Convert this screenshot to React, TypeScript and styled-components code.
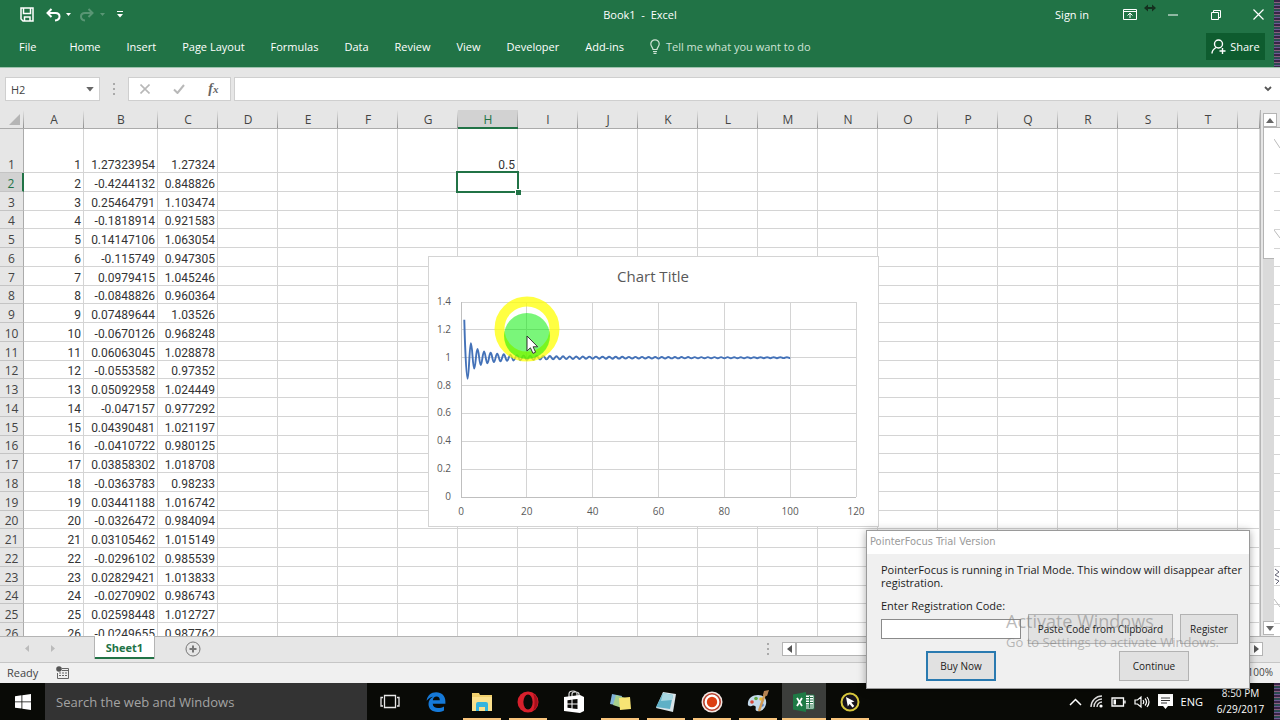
import React from "react";
import styled, { createGlobalStyle, css } from "styled-components";

const GREEN = "#217346";
const UI_FONT = '"Open Sans", "Noto Sans", sans-serif';
const CELL_FONT = 'Roboto, "Open Sans", sans-serif';

const GlobalStyle = createGlobalStyle`
  *, *::before, *::after { box-sizing: border-box; }
  body { margin: 0; font-family: ${UI_FONT}; font-size: 11px; color: #444; }
  button, input { font: inherit; color: inherit; margin: 0; padding: 0; }
  button { background: none; border: 0; cursor: default; }
  svg { display: block; flex: none; }
`;

const Desktop = styled.div`
  position: relative;
  display: flex;
  flex-direction: column;
  height: 100vh;
  overflow: hidden;
  background: #e6e6e6;
`;

/* ---------- title bar and ribbon ---------- */

const Header = styled.header`
  position: relative;
  background: ${GREEN};
  color: #fff;
  border-bottom: 1px solid #9fc3ae;
  height: 68px;
`;

const TitleBar = styled.div`
  display: grid;
  grid-template-columns: 1fr auto 1fr;
  align-items: center;
  height: 29px;
`;

const QuickAccess = styled.div`
  display: flex;
  align-items: center;
  padding-left: 20px;
`;

const QuickButton = styled.button<{ $gap?: number; $dim?: boolean }>`
  margin-right: ${(p) => p.$gap ?? 0}px;
  opacity: ${(p) => (p.$dim ? 0.25 : 1)};
`;

const Title = styled.h1`
  margin: 0;
  font-size: 11px;
  font-weight: 400;
  white-space: pre;
`;

const WindowControls = styled.div`
  display: flex;
  justify-content: flex-end;
  align-items: center;
`;

const SignIn = styled.button`
  margin-right: 19px;
`;

const WindowButton = styled.button`
  display: flex;
  justify-content: center;
  width: 43px;
`;

const ResizeCursor = styled.svg`
  position: absolute;
  right: 124px;
  top: 4px;
`;

const Ribbon = styled.nav`
  display: flex;
  align-items: center;
  height: 35px;
  gap: 26px;
  padding: 0 15px 0 19px;
`;

const RibbonTab = styled.button<{ $file?: boolean }>`
  margin-right: ${(p) => (p.$file ? 7 : 0)}px;
  white-space: nowrap;
`;

const TellMe = styled.button`
  display: flex;
  align-items: center;
  gap: 6px;
  color: #cfe3d6;
  white-space: nowrap;
`;

const Share = styled.button`
  display: flex;
  align-items: center;
  justify-content: center;
  gap: 4px;
  width: 59px;
  height: 27px;
  margin-left: auto;
  background: #0e5c2f;
`;

const noise = css`
  background-color: #3b2f45;
  background-image: repeating-linear-gradient(
    to bottom,
    #3a2448 0,
    #3a2448 2px,
    #8a5f7c 2px,
    #8a5f7c 3px,
    #2c4a52 3px,
    #2c4a52 5px,
    #6d5a94 5px,
    #6d5a94 6px
  );
`;

const NoiseStrip = styled.div`
  position: absolute;
  top: 0;
  right: 0;
  bottom: 0;
  width: 6px;
  ${noise}
`;

/* ---------- formula bar ---------- */

const FormulaBar = styled.div`
  display: flex;
  align-items: center;
  height: 42px;
  padding-left: 5px;
`;

const NameBox = styled.label`
  display: flex;
  align-items: center;
  width: 95px;
  height: 24px;
  padding: 0 5px;
  background: #fff;
  border: 1px solid #cfcfcf;
`;

const NameInput = styled.input`
  flex: 1;
  min-width: 0;
  border: 0;
  outline: 0;
  background: none;
`;

const Grip = styled.div`
  width: 2px;
  height: 12px;
  margin: 0 13px;
  background: repeating-linear-gradient(to bottom, #aaa 0, #aaa 2px, transparent 2px, transparent 5px);
`;

const FormulaButtons = styled.div`
  display: flex;
  align-items: center;
  justify-content: space-around;
  width: 103px;
  height: 24px;
  margin-right: 3px;
  background: #fff;
  border: 1px solid #cfcfcf;
`;

const Fx = styled.span`
  font-family: "Liberation Serif", serif;
  font-style: italic;
  font-weight: 700;
  font-size: 14px;
  line-height: 16px;
  color: #666;
  small { font-size: 11px; }
`;

const FormulaField = styled.label`
  display: flex;
  flex: 1;
  align-items: center;
  height: 24px;
  padding: 0 8px;
  background: #fff;
  border: 1px solid #cfcfcf;
  border-right: 0;
`;

/* ---------- sheet ---------- */

const SheetArea = styled.main`
  position: relative;
  display: flex;
  flex: 1;
  min-height: 0;
  overflow: hidden;
`;

const GridPane = styled.div`
  position: relative;
  flex: 1;
  min-width: 0;
  overflow: hidden;
  border-right: 1px solid #b4b4b4;
`;

const Grid = styled.table`
  width: 100%;
  table-layout: fixed;
  border-collapse: separate;
  border-spacing: 0;
  background: #fff;
`;

const Col = styled.col<{ $w?: number }>`
  width: ${(p) => (p.$w ? p.$w + "px" : "auto")};
`;

const ColHead = styled.th<{ $active?: boolean }>`
  height: 19px;
  padding: ${(p) => (p.$active ? 2 : 1)}px 0 0;
  font-size: 12px;
  line-height: 15px;
  font-weight: 400;
  color: ${(p) => (p.$active ? GREEN : "#444")};
  background: linear-gradient(to bottom, transparent, #8f8f8f) right / 1px 100% no-repeat
    ${(p) => (p.$active ? "#d2d2d2" : "#e6e6e6")};
  border-bottom: ${(p) => (p.$active ? `2px solid ${GREEN}` : "1px solid #ababab")};
`;

const Row = styled.tr<{ $tall?: boolean }>`
  height: ${(p) => (p.$tall ? 44 : 19)}px;
  &:nth-child(4n) { height: 18px; }
`;

const RowHead = styled.th<{ $active?: boolean }>`
  padding: 0;
  vertical-align: bottom;
  font-size: 12px;
  line-height: 15px;
  font-weight: 400;
  color: ${(p) => (p.$active ? GREEN : "#444")};
  background: ${(p) => (p.$active ? "#d2d2d2" : "#e6e6e6")};
  border-right: ${(p) => (p.$active ? `2px solid ${GREEN}` : "1px solid #ababab")};
  border-bottom: 1px solid #c4c4c4;
`;

const Cell = styled.td<{ $selected?: boolean }>`
  padding: 0 2px 0 0;
  vertical-align: bottom;
  text-align: right;
  font-family: ${CELL_FONT};
  font-size: 12px;
  line-height: 13px;
  color: #333;
  white-space: nowrap;
  border-right: 1px solid #d4d4d4;
  border-bottom: 1px solid #d4d4d4;
  ${(p) =>
    p.$selected &&
    css`
      position: relative;
      &::before {
        content: "";
        position: absolute;
        inset: -2px;
        border: 2px solid ${GREEN};
      }
      &::after {
        content: "";
        position: absolute;
        right: -4px;
        bottom: -4px;
        width: 6px;
        height: 6px;
        background: ${GREEN};
        border: 1px solid #fff;
        border-width: 1px 0 0 1px;
      }
    `}
`;

const ChartFrame = styled.figure`
  position: absolute;
  left: 428px;
  top: 146px;
  margin: 0;
  background: #fff;
  border: 1px solid #d4d4d4;
`;

const Pointer = styled.svg`
  position: absolute;
  left: 65px;
  top: 38px;
`;

const ScrollColumn = styled.div`
  display: flex;
  flex-direction: column;
  width: 19px;
  padding: 3px 0 1px 2px;
  background: #e6e6e6;
`;

const ScrollButton = styled.button`
  display: flex;
  align-items: center;
  justify-content: center;
  width: 14px;
  height: 14px;
  background: #fff;
  border: 1px solid #b4b4b4;
`;

const ScrollTrack = styled.div`
  flex: 1;
  background: #dadada;
`;

const ScrollThumb = styled.div`
  height: 132px;
  background: #fff;
  border: 1px solid #b4b4b4;
  border-right: 0;
`;

const SheetStrip = styled.svg`
  position: absolute;
  right: 0;
  top: 19px;
`;

/* ---------- sheet tabs and status ---------- */

const TabBar = styled.div`
  display: flex;
  align-items: flex-start;
  height: 26px;
  border-top: 1px solid #b4b4b4;
  background: #e6e6e6;
`;

const TabNav = styled.div`
  display: flex;
  gap: 22px;
  width: 94px;
  padding: 8px 0 0 25px;
`;

const SheetTab = styled.button`
  width: 61px;
  height: 23px;
  margin-top: -1px;
  background: #fff;
  border: 1px solid #b4b4b4;
  border-width: 0 1px;
  box-shadow: inset 0 -2px 0 ${GREEN};
  font-weight: 700;
  color: ${GREEN};
`;

const AddSheet = styled.button`
  margin: 4px 0 0 30px;
`;

const HScroll = styled.div`
  display: flex;
  align-items: center;
  width: 526px;
  margin: 5px 0 0 auto;
  padding-right: 17px;
`;

const HTrack = styled.div`
  flex: 1;
  height: 14px;
  background: #fff;
  border: 1px solid #b4b4b4;
`;

const StatusBar = styled.footer`
  display: flex;
  align-items: center;
  height: 21px;
  gap: 18px;
  padding: 0 7px 2px;
  background: #f0f0f0;
  border-top: 1px solid #c6c6c6;
`;

const Zoom = styled.span`
  margin-left: auto;
  font-size: 10px;
`;

/* ---------- dialog ---------- */

const Dialog = styled.section`
  position: absolute;
  right: 30px;
  bottom: 31px;
  width: 384px;
  background: #f0f0f0;
  border: 1px solid #9a9a9a;
  box-shadow: 0 1px 8px rgba(0, 0, 0, 0.35);
  color: #1c1c1c;
`;

const DialogTitle = styled.h2`
  margin: 0;
  padding: 0 3px;
  height: 23px;
  font-family: "DejaVu Sans Condensed", "DejaVu Sans", sans-serif;
  font-size: 11px;
  font-weight: 400;
  line-height: 22px;
  background: #fff;
  color: #9b9b9b;
`;

const DialogBody = styled.form`
  padding: 9px 11px 7px 14px;
`;

const Message = styled.p`
  margin: 0 -8px 10px 0;
  line-height: 13px;
`;

const CodeLabel = styled.label`
  display: block;
  line-height: 13px;
`;

const CodeRow = styled.div`
  display: flex;
  align-items: center;
  gap: 7px;
  height: 32px;
  margin: 1px 0 6px;
`;

const CodeInput = styled.input`
  flex: 1;
  min-width: 0;
  height: 20px;
  padding: 0 4px;
  background: #fff;
  border: 1px solid #8a8a8a;
`;

const DialogButton = styled.button<{ $w: number; $primary?: boolean }>`
  width: ${(p) => p.$w}px;
  height: 30px;
  font-size: 10px;
  background: #e1e1e1;
  border: ${(p) => (p.$primary ? "2px solid #2a7ab0" : "1px solid #b2b2b2")};
`;

const DialogActions = styled.div`
  display: flex;
  justify-content: space-between;
  padding: 0 49px 0 45px;
`;

const Watermark = styled.div`
  position: absolute;
  right: 52px;
  bottom: 69px;
  width: 222px;
  color: rgba(120, 120, 120, 0.5);
  pointer-events: none;
  white-space: nowrap;
  font-size: 13px;
  line-height: 18px;
  strong {
    display: block;
    font-weight: 400;
    font-size: 18px;
    line-height: 24px;
  }
`;

/* ---------- taskbar ---------- */

const Taskbar = styled.div`
  position: relative;
  display: flex;
  height: 37px;
  background: #090a06;
  color: #fff;
`;

const StartButton = styled.button`
  display: flex;
  align-items: center;
  justify-content: center;
  width: 45px;
`;

const Search = styled.input`
  width: 322px;
  padding: 0 11px;
  border: 0;
  outline: 0;
  background: #333;
  font-size: 13px;
  &::placeholder { color: #a3a3a3; opacity: 1; }
`;

const TaskButton = styled.button<{ $open?: boolean; $active?: boolean }>`
  display: flex;
  align-items: center;
  justify-content: center;
  width: ${(p) => (p.$active ? 44 : 38)}px;
  margin: 0 ${(p) => (p.$active ? 1 : 4)}px;
  background: ${(p) => (p.$active ? "#3c3e3b" : "none")};
  border-top: 2px solid transparent;
  border-bottom: 2px solid ${(p) => (p.$open ? "#f9c57c" : "transparent")};
`;

const Tray = styled.div`
  display: flex;
  align-items: center;
  gap: 8px;
  margin-left: auto;
  padding-right: 10px;
`;

const Clock = styled.time`
  width: 59px;
  padding-bottom: 2px;
  text-align: center;
  font-size: 10px;
  line-height: 16px;
`;

const Caret = ({ color = "#fff", size = 6 }: { color?: string; size?: number }) => (
  <svg width={size} height={size / 2 + 1} viewBox="0 0 6 4">
    <path d="M0 0h6L3 3.5z" fill={color} />
  </svg>
);

const term = (k: number) => ((4 / Math.PI) * (k % 2 ? 1 : -1)) / (2 * k - 1);
const trim = (v: number, digits: number) => String(parseFloat(v.toFixed(digits)));

const sums: number[] = [];
for (let k = 1; k <= 100; k++) sums.push((sums[k - 2] ?? 0) + term(k));

const columns = "ABCDEFGHIJKLMNOPQRST".split("");

function cellText(col: string, row: number): string {
  if (col === "A") return String(row);
  if (col === "B") return trim(term(row), row % 2 ? 8 : 7);
  if (col === "C") return trim(sums[row - 1], 6);
  if (col === "H" && row === 1) return "0.5";
  return "";
}

const PLOT = { x: 32, y: 45, w: 395, h: 195 };
const px = (v: number) => PLOT.x + (v / 120) * PLOT.w;
const py = (v: number) => PLOT.y + PLOT.h - (v / 1.4) * PLOT.h;

function linePath() {
  let d = `M${px(1)} ${py(sums[0])}`;
  for (let i = 1; i < sums.length; i++) {
    const a = px(i);
    const b = px(i + 1);
    const m = (b - a) * 0.42;
    const y0 = py(sums[i - 1]);
    const y1 = py(sums[i]);
    d += `C${i === 1 ? a + 0.5 : a + m} ${i === 1 ? y0 + 20 : y0} ${b - m} ${y1} ${b} ${y1}`;
  }
  return d;
}

function Chart() {
  return (
    <ChartFrame>
      <svg width="449" height="269" fontFamily={UI_FONT} fill="#595959" role="img" aria-label="Chart Title">
        <text x="224" y="25" fontSize="15" textAnchor="middle">Chart Title</text>
        <g stroke="#d4d4d4" shapeRendering="crispEdges">
          {[0.2, 0.4, 0.6, 0.8, 1, 1.2, 1.4].map((v) => (
            <line key={v} x1={PLOT.x} x2={PLOT.x + PLOT.w} y1={py(v)} y2={py(v)} />
          ))}
          {[20, 40, 60, 80, 100, 120].map((v) => (
            <line key={v} x1={px(v)} x2={px(v)} y1={PLOT.y} y2={PLOT.y + PLOT.h} />
          ))}
          <path d={`M${PLOT.x} ${PLOT.y}v${PLOT.h}h${PLOT.w}`} fill="none" stroke="#bfbfbf" />
        </g>
        <g fontSize="10">
          {[0, 0.2, 0.4, 0.6, 0.8, 1, 1.2, 1.4].map((v) => (
            <text key={v} x="22" y={py(v) + 3} textAnchor="end">{v}</text>
          ))}
          {[0, 20, 40, 60, 80, 100, 120].map((v) => (
            <text key={v} x={px(v)} y="258" textAnchor="middle">{v}</text>
          ))}
        </g>
        <path d={linePath()} fill="none" stroke="#4472b8" strokeWidth="1.9" strokeLinejoin="round" />
      </svg>
      <Pointer width="66" height="68">
        <circle cx="33" cy="34" r="27.5" fill="none" stroke="#ffff00" strokeOpacity="0.74" strokeWidth="10" />
        <circle cx="33" cy="41" r="23" fill="#00ee00" fillOpacity="0.52" />
        <path d="M33 41v15l3.400-3.200 2.600 5.600 2.600-1.200-2.500-5.400h4.600z" fill="#fff" stroke="#333" />
      </Pointer>
    </ChartFrame>
  );
}

function Worksheet() {
  return (
    <SheetArea>
      <GridPane>
        <Grid>
          <colgroup>
            <Col $w={24} />
            {columns.map((c) => (
              <Col key={c} $w={c === "B" ? 74 : 60} />
            ))}
            <Col />
          </colgroup>
          <thead>
            <tr>
              <ColHead>
                <svg width="23" height="15"><path d="M20 2v11H9z" fill="#b5b5b5" /></svg>
              </ColHead>
              {columns.map((c) => (
                <ColHead key={c} scope="col" $active={c === "H"}>{c}</ColHead>
              ))}
              <ColHead />
            </tr>
          </thead>
          <tbody>
            {Array.from({ length: 26 }, (_, i) => i + 1).map((row) => (
              <Row key={row} $tall={row === 1}>
                <RowHead scope="row" $active={row === 2}>{row}</RowHead>
                {columns.map((c) => (
                  <Cell key={c} $selected={c === "H" && row === 2}>{cellText(c, row)}</Cell>
                ))}
                <Cell />
              </Row>
            ))}
          </tbody>
        </Grid>
        <Chart />
      </GridPane>
      <ScrollColumn>
        <ScrollButton aria-label="Scroll up"><svg width="8" height="5"><path d="M0 5h8L4 0z" fill="#666" /></svg></ScrollButton>
        <ScrollTrack><ScrollThumb /></ScrollTrack>
        <ScrollButton aria-label="Scroll down"><svg width="8" height="5"><path d="M0 0h8L4 5z" fill="#666" /></svg></ScrollButton>
      </ScrollColumn>
      <SheetStrip width="6" height="600">
        <rect width="6" height="600" fill="#fff" />
        <g stroke="#d4d4d4" shapeRendering="crispEdges">
          {Array.from({ length: 30 }, (_, i) => (
            <line key={i} x1="0" x2="6" y1={44 + i * 18.75} y2={44 + i * 18.75} />
          ))}
        </g>
        <path d="M0 10l6 9M0 101l6 8M0 470l6 8" stroke="#bbb" fill="none" />
        <path d="M1 440l4 3-4 3 4 2M1 450l4 2-3 3" stroke="#667" fill="none" />
      </SheetStrip>
    </SheetArea>
  );
}

function TrialDialog() {
  return (
    <Dialog role="dialog" aria-labelledby="trial-title">
      <DialogTitle id="trial-title">PointerFocus Trial Version</DialogTitle>
      <DialogBody onSubmit={(e) => e.preventDefault()}>
        <Message>PointerFocus is running in Trial Mode. This window will disappear after registration.</Message>
        <CodeLabel htmlFor="code">Enter Registration Code:</CodeLabel>
        <CodeRow>
          <CodeInput id="code" />
          <DialogButton type="button" $w={145}>Paste Code from Clipboard</DialogButton>
          <DialogButton type="submit" $w={58}>Register</DialogButton>
        </CodeRow>
        <DialogActions>
          <DialogButton type="button" $w={70} $primary>Buy Now</DialogButton>
          <DialogButton type="button" $w={70}>Continue</DialogButton>
        </DialogActions>
      </DialogBody>
    </Dialog>
  );
}

const tabs = ["File", "Home", "Insert", "Page Layout", "Formulas", "Data", "Review", "View", "Developer", "Add-ins"];

const apps: { name: string; open?: boolean; active?: boolean; icon: React.ReactNode }[] = [
  {
    name: "Task View",
    icon: (
      <svg width="20" height="16" fill="none" stroke="#e8e8e8" strokeWidth="1.3">
        <path d="M4.5 1.5h11v12h-11zM3 3.5H1v8.500h2M17 3.5h2v8.500h-2" />
      </svg>
    ),
  },
  {
    name: "Edge",
    icon: (
      <svg width="20" height="20" viewBox="0 0 20 20">
        <path
          d="M.6 8.800C1.300 3.500 5 .3 10.200.3c5.600 0 9.200 3.800 9.200 9.300v2.200H6.700c.2 3 2.500 4.300 5.300 4.300 2.200 0 4.200-.6 6-1.700v4c-1.900 1.100-4.200 1.500-6.600 1.500-5.300 0-8.900-3-8.900-7.900 0-3.200 1.700-5.900 4.600-7.300C5 5 3.200 5.800.6 8.800zM6.800 8.300h7c0-2.300-1-3.700-3.300-3.700-2.100 0-3.400 1.500-3.700 3.700z"
          fill="#1579d8"
        />
      </svg>
    ),
  },
  {
    name: "File Explorer",
    open: true,
    icon: (
      <svg width="22" height="20" viewBox="0 0 22 20">
        <path d="M1 1h7l1 2h12v16H1z" fill="#f0cf6c" />
        <path d="M1 5h20v14H1z" fill="#fbe08c" />
        <path d="M5 19v-7q0-2 2-2h8q2 0 2 2v7h-3v-4H8v4z" fill="#35b4de" />
      </svg>
    ),
  },
  {
    name: "Opera",
    open: true,
    icon: (
      <svg width="22" height="22" viewBox="0 0 22 22">
        <ellipse cx="11" cy="11" rx="10.500" ry="10.500" fill="#d8202c" />
        <ellipse cx="11" cy="11" rx="4.600" ry="7.500" fill="#0b0a08" />
        <path d="M16 2.200a10.500 10.500 0 0 1 0 17.600c2-4 2-13 0-17.600z" fill="#a30f1b" />
      </svg>
    ),
  },
  {
    name: "Store",
    icon: (
      <svg width="20" height="23" viewBox="0 0 20 23">
        <path d="M5 7V4q0-3 4-3t4 3v3M8 6V4q0-2 3.500-2T15 4v2" fill="none" stroke="#ddd" strokeWidth="1.200" />
        <path d="M0 7l16-2 4 2v14l-4 2-16-2z" fill="#fff" />
        <path d="M3.500 10.200l4-.5v3.800h-4zM8.500 9.600l5-.6v4.500h-5zM3.500 14.500h4v3.800l-4-.5zM8.500 14.500h5V19l-5-.6z" fill="#0b0a08" />
      </svg>
    ),
  },
  {
    name: "Sticky Notes",
    open: true,
    icon: (
      <svg width="22" height="20" viewBox="0 0 22 20">
        <path d="M3 2l10 2-2 10-10-2z" fill="#7fb2d8" />
        <path d="M7 3l9 3-3 10-9-3z" fill="#a6cf8c" />
        <path d="M10 6l11-1 1 12-11 1z" fill="#f8e474" />
      </svg>
    ),
  },
  {
    name: "Notepad",
    open: true,
    icon: (
      <svg width="22" height="22" viewBox="0 0 22 22">
        <path d="M8 1l13 2-3 18-17-4z" fill="#d9e4e8" />
        <path d="M8 2l10 2-3 14-14-2z" fill="#5fb0c6" />
        <path d="M8 2l10 2-1 5-11 1z" fill="#a8d7e2" />
      </svg>
    ),
  },
  {
    name: "Recorder",
    open: true,
    icon: (
      <svg width="22" height="22" viewBox="0 0 22 22">
        <circle cx="11" cy="11" r="10.500" fill="#f3e6e2" />
        <circle cx="11" cy="11" r="8.200" fill="#fff" stroke="#b8402c" strokeWidth="1.600" />
        <circle cx="11" cy="11" r="5.200" fill="#dc3f13" />
      </svg>
    ),
  },
  {
    name: "Paint",
    open: true,
    icon: (
      <svg width="24" height="24" viewBox="0 0 24 24">
        <path d="M2 15C1 9 6 5 12 5c6 0 9 4 8 9-1 5-5 8-9 7-3-1 0-4-2-5-2-2-5 2-7-1z" fill="#c3d9ea" />
        <circle cx="6" cy="12" r="1.800" fill="#d9483a" />
        <circle cx="10" cy="8.500" r="1.800" fill="#61a844" />
        <circle cx="15" cy="9" r="1.800" fill="#e9b92f" />
        <circle cx="16" cy="15" r="1.800" fill="#4d78c8" />
        <path d="M19 4l-6 17" stroke="#d09a54" strokeWidth="2.400" />
        <path d="M17 5l1-4 5-1-2 6z" fill="#b58252" />
      </svg>
    ),
  },
  {
    name: "Excel",
    open: true,
    active: true,
    icon: (
      <svg width="22" height="20" viewBox="0 0 22 20">
        <path d="M11 3h10v14H11z" fill="#fff" stroke="#217346" />
        <path d="M13 5.500h7M13 8h7M13 10.500h7M13 13h7M13 15h7M16.500 4v12" stroke="#217346" />
        <path d="M0 2.500L13 0v20L0 17.500z" fill="#1e7a45" />
        <path d="M4 6l5 8M9 6l-5 8" stroke="#fff" strokeWidth="1.800" />
      </svg>
    ),
  },
  {
    name: "PointerFocus",
    open: true,
    icon: (
      <svg width="20" height="20" viewBox="0 0 20 20">
        <circle cx="10" cy="10" r="8.500" fill="#17131c" stroke="#d7c63c" strokeWidth="2" />
        <path d="M6 5l8.500 4.500-3.200 1 3 3.500-1.800 1.500-2.900-3.500-1.800 2.600z" fill="#fff" />
      </svg>
    ),
  },
];

export default function App() {
  return (
    <Desktop>
      <GlobalStyle />
      <Header>
        <TitleBar>
          <QuickAccess>
            <QuickButton aria-label="Save" $gap={12}>
              <svg width="14" height="15" fill="none" stroke="#fff" strokeWidth="1.500">
                <path d="M1 1h12v13H3l-2-2zM3.500 1v5.500h7V1M4.500 14v-4h5.500v4" />
              </svg>
            </QuickButton>
            <QuickButton aria-label="Undo" $gap={5}>
              <svg width="15" height="14" fill="none" stroke="#fff" strokeWidth="2">
                <path d="M5.500 1L1.500 5l4 4M2 5h7.500q4 0 4 3.500T9 12.500" />
              </svg>
            </QuickButton>
            <QuickButton aria-label="Undo list" $gap={9}><Caret size={5} /></QuickButton>
            <QuickButton aria-label="Redo" $dim $gap={6}>
              <svg width="14" height="14" fill="none" stroke="#fff" strokeWidth="2">
                <path d="M8.500 1l4 4-4 4M12 5H5Q1 5 1 8.500t4 4" />
              </svg>
            </QuickButton>
            <QuickButton aria-label="Redo list" $dim $gap={12}><Caret size={5} /></QuickButton>
            <QuickButton aria-label="Customize">
              <svg width="6" height="7"><path d="M0 .500h6" stroke="#fff" /><path d="M0 3h6L3 6.500z" fill="#fff" /></svg>
            </QuickButton>
          </QuickAccess>
          <Title>{"Book1  -  Excel"}</Title>
          <WindowControls>
            <SignIn>Sign in</SignIn>
            <WindowButton aria-label="Ribbon display options">
              <svg width="14" height="11" fill="none" stroke="#fff">
                <path d="M.5.500h13v10H.500zM.5 2.500h13M7 9V4.500M4.500 6.500L7 4l2.500 2.500" />
              </svg>
            </WindowButton>
            <WindowButton aria-label="Minimize"><svg width="10" height="2"><path d="M0 1h10" stroke="#fff" /></svg></WindowButton>
            <WindowButton aria-label="Restore">
              <svg width="10" height="10" fill="none" stroke="#fff"><path d="M.5 2.500h7v7h-7zM2.500 2V.500h7v7H8" /></svg>
            </WindowButton>
            <WindowButton aria-label="Close">
              <svg width="11" height="11" stroke="#fff" strokeWidth="1.200"><path d="M.5.500l10 10M10.500.500l-10 10" /></svg>
            </WindowButton>
          </WindowControls>
        </TitleBar>
        <Ribbon>
          {tabs.map((t) => (
            <RibbonTab key={t} $file={t === "File"}>{t}</RibbonTab>
          ))}
          <TellMe>
            <svg width="10" height="15" fill="none" stroke="#cfe3d6" strokeWidth="1.200">
              <path d="M3 10.500C3 8.500.8 7.500.8 5a4.200 4.200 0 0 1 8.400 0C9.200 7.500 7 8.500 7 10.500zM3 12.500h4M3.500 14.300h3" />
            </svg>
            Tell me what you want to do
          </TellMe>
          <Share>
            <svg width="15" height="16" fill="none" stroke="#fff" strokeWidth="1.400">
              <circle cx="7.500" cy="5" r="4" />
              <path d="M1 14.500c0-3 1.500-4.500 4-6M11.500 9v6M8.500 12h6" />
            </svg>
            Share
          </Share>
        </Ribbon>
        <ResizeCursor width="12" height="8" fill="#14301f" aria-hidden="true">
          <path d="M0 4l4-3.500V3h4V.500L12 4 8 7.500V5H4v2.500z" />
        </ResizeCursor>
        <NoiseStrip />
      </Header>

      <FormulaBar>
        <NameBox>
          <NameInput aria-label="Name box" defaultValue="H2" />
          <Caret color="#666" size={8} />
        </NameBox>
        <Grip />
        <FormulaButtons>
          <button aria-label="Cancel">
            <svg width="10" height="10" stroke="#b8b8b8" strokeWidth="1.600"><path d="M.5.500l9 9M9.500.500l-9 9" /></svg>
          </button>
          <button aria-label="Enter">
            <svg width="12" height="10" fill="none" stroke="#b8b8b8" strokeWidth="2"><path d="M1 5.500L4.500 9 11 1" /></svg>
          </button>
          <button aria-label="Insert function"><Fx>f<small>x</small></Fx></button>
        </FormulaButtons>
        <FormulaField>
          <NameInput aria-label="Formula" />
          <svg width="8" height="6" fill="none" stroke="#555" strokeWidth="1.800"><path d="M1 1l3 3 3-3" /></svg>
        </FormulaField>
      </FormulaBar>

      <Worksheet />

      <TabBar>
        <TabNav>
          <button aria-label="Previous sheet"><svg width="4" height="7"><path d="M4 0v7L0 3.500z" fill="#bbb" /></svg></button>
          <button aria-label="Next sheet"><svg width="4" height="7"><path d="M0 0v7l4-3.500z" fill="#bbb" /></svg></button>
        </TabNav>
        <SheetTab>Sheet1</SheetTab>
        <AddSheet aria-label="New sheet">
          <svg width="16" height="16" fill="none" stroke="#777">
            <circle cx="8" cy="8" r="7" />
            <path d="M8 4.500v7M4.500 8h7" strokeWidth="2" />
          </svg>
        </AddSheet>
        <HScroll>
          <Grip />
          <ScrollButton aria-label="Scroll left"><svg width="5" height="8"><path d="M5 0v8L0 4z" fill="#555" /></svg></ScrollButton>
          <HTrack />
          <ScrollButton aria-label="Scroll right"><svg width="5" height="8"><path d="M0 0v8l5-4z" fill="#555" /></svg></ScrollButton>
        </HScroll>
      </TabBar>
      <StatusBar>
        <span>Ready</span>
        <svg width="13" height="13" fill="none" stroke="#666">
          <path d="M6 2.500h6.500v10h-11V7M3 7h2M6 7h2M9 7h2M3 9.500h2M6 9.500h2M9 9.500h2M6 4.500h6" />
          <circle cx="3" cy="3" r="2.800" fill="#555" stroke="none" />
        </svg>
        <Zoom>100%</Zoom>
      </StatusBar>

      <Taskbar>
        <StartButton aria-label="Start">
          <svg width="16" height="16" viewBox="0 0 16 16" fill="#fff">
            <path d="M0 2.200l6.500-.9v6.200H0zM7.300 1.200L16 0v7.500H7.300zM0 8.300h6.500v6.300L0 13.700zM7.300 8.300H16V16l-8.700-1.200z" />
          </svg>
        </StartButton>
        <Search aria-label="Search" placeholder="Search the web and Windows" />
        {apps.map((a) => (
          <TaskButton key={a.name} aria-label={a.name} $open={a.open} $active={a.active}>{a.icon}</TaskButton>
        ))}
        <Tray>
          <svg width="13" height="8" fill="none" stroke="#fff" strokeWidth="1.500"><path d="M1 7l5.500-5.500L12 7" /></svg>
          <svg width="13" height="13" fill="none" stroke="#ddd" strokeWidth="1.400">
            <path d="M1 12A11 11 0 0 1 12 1M4 12a8 8 0 0 1 8-8M7 12a5 5 0 0 1 5-5" />
            <circle cx="11" cy="11" r="1.600" fill="#fff" stroke="none" />
          </svg>
          <svg width="15" height="10" fill="none" stroke="#fff" strokeWidth="1.300">
            <path d="M1 1h11.500v8H1zM14 3.500v3" /><path d="M2.500 2.500H5v5H2.500z" fill="#fff" stroke="none" />
          </svg>
          <svg width="16" height="14" fill="none" stroke="#fff" strokeWidth="1.200">
            <path d="M1 5h2.500L7 2v10L3.500 9H1zM9 5q1.500 2 0 4M11 3.500q3 3.500 0 7M13 2q4 5 0 10" />
          </svg>
          <svg width="15" height="15"><path d="M0 0h15v12H10l-2.500 3L5 12H0z" fill="#fff" /><path d="M3 4h9M3 6.500h9M3 9h6" stroke="#333" /></svg>
          <span>ENG</span>
          <Clock>8:50 PM<br />6/29/2017</Clock>
        </Tray>
        <NoiseStrip />
      </Taskbar>

      <TrialDialog />
      <Watermark><strong>Activate Windows</strong>Go to Settings to activate Windows.</Watermark>
    </Desktop>
  );
}
